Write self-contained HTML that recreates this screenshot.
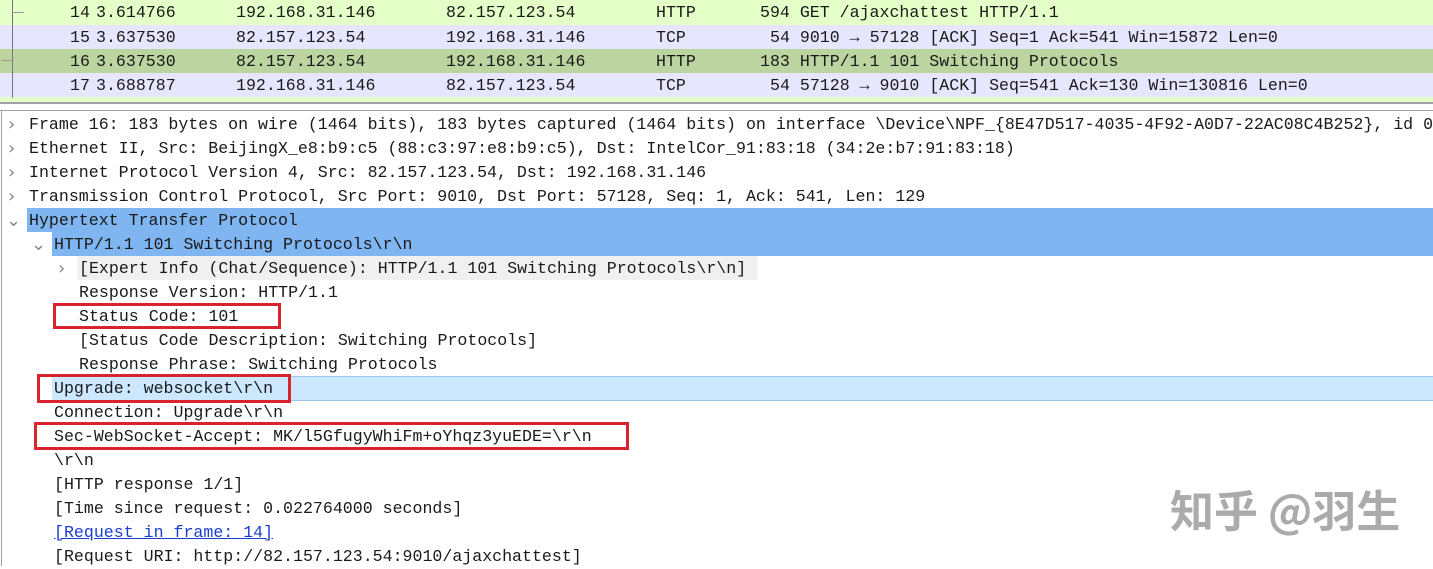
<!DOCTYPE html>
<html><head><meta charset="utf-8"><style>
body{margin:0;width:1433px;height:566px;overflow:hidden;background:#fff;position:relative;font-family:"Liberation Mono",monospace;font-size:16.6px;color:#1a1a1a}
.r{position:absolute;left:0;width:1433px;height:24px;line-height:25px;white-space:pre}
.c{position:absolute;top:0}
.t{position:absolute;top:0;white-space:pre}
.ar{position:absolute;top:0;color:#888;font-family:"DejaVu Sans",sans-serif;font-size:18px}
.box{position:absolute;border:3px solid #d9232e;box-sizing:border-box}
</style></head><body>
<div style="position:absolute;left:0;top:0;width:1433px;height:102px;background:#e4ffc7"></div>
<div class="r" style="top:0;background:#e4ffc7"><span class="c" style="left:70px">14</span><span class="c" style="left:96px">3.614766</span><span class="c" style="left:236px">192.168.31.146</span><span class="c" style="left:446px">82.157.123.54</span><span class="c" style="left:656px">HTTP</span><span class="c" style="left:760px">594 GET /ajaxchattest HTTP/1.1</span></div>
<div class="r" style="top:25px;background:#e7e6ff"><span class="c" style="left:70px">15</span><span class="c" style="left:96px">3.637530</span><span class="c" style="left:236px">82.157.123.54</span><span class="c" style="left:446px">192.168.31.146</span><span class="c" style="left:656px">TCP</span><span class="c" style="left:770px">54 9010 → 57128 [ACK] Seq=1 Ack=541 Win=15872 Len=0</span></div>
<div class="r" style="top:49px;background:#bcd5a0"><span class="c" style="left:70px">16</span><span class="c" style="left:96px">3.637530</span><span class="c" style="left:236px">82.157.123.54</span><span class="c" style="left:446px">192.168.31.146</span><span class="c" style="left:656px">HTTP</span><span class="c" style="left:760px">183 HTTP/1.1 101 Switching Protocols</span></div>
<div class="r" style="top:73px;background:#e7e6ff"><span class="c" style="left:70px">17</span><span class="c" style="left:96px">3.688787</span><span class="c" style="left:236px">192.168.31.146</span><span class="c" style="left:446px">82.157.123.54</span><span class="c" style="left:656px">TCP</span><span class="c" style="left:770px">54 57128 → 9010 [ACK] Seq=541 Ack=130 Win=130816 Len=0</span></div>
<div style="position:absolute;left:12px;top:0;width:1px;height:98px;background:#777"></div>
<div style="position:absolute;left:12px;top:12px;width:12px;height:1px;background:#999"></div>
<div style="position:absolute;left:2px;top:60px;width:12px;height:1px;background:#999"></div>
<div style="position:absolute;left:0;top:102px;width:1433px;height:2px;background:#a0a0a0"></div>
<div style="position:absolute;left:0;top:110px;width:1433px;height:1px;background:#a0a0a0"></div>
<div style="position:absolute;left:1px;top:110px;width:1px;height:456px;background:#a0a0a0"></div>

<div class="r" style="top:208px;left:27px;width:1406px;background:#7fb5f0"></div>
<div class="r" style="top:232px;left:52px;width:1381px;background:#7fb5f0"></div>
<div class="r" style="top:256px;left:77px;width:680px;background:#f0f0f0"></div>
<div class="r" style="top:376px;left:52px;width:1381px;background:#cce8ff;border-top:1px solid #99c9ef;border-bottom:1px solid #99c9ef;height:23px"></div>

<div class="r" style="top:112px"><span class="ar" style="left:8px">›</span><span class="t" style="left:29px">Frame 16: 183 bytes on wire (1464 bits), 183 bytes captured (1464 bits) on interface \Device\NPF_{8E47D517-4035-4F92-A0D7-22AC08C4B252}, id 0</span></div>
<div class="r" style="top:136px"><span class="ar" style="left:8px">›</span><span class="t" style="left:29px">Ethernet II, Src: BeijingX_e8:b9:c5 (88:c3:97:e8:b9:c5), Dst: IntelCor_91:83:18 (34:2e:b7:91:83:18)</span></div>
<div class="r" style="top:160px"><span class="ar" style="left:8px">›</span><span class="t" style="left:29px">Internet Protocol Version 4, Src: 82.157.123.54, Dst: 192.168.31.146</span></div>
<div class="r" style="top:184px"><span class="ar" style="left:8px">›</span><span class="t" style="left:29px">Transmission Control Protocol, Src Port: 9010, Dst Port: 57128, Seq: 1, Ack: 541, Len: 129</span></div>
<div class="r" style="top:208px"><span class="ar" style="left:6px">⌄</span><span class="t" style="left:29px">Hypertext Transfer Protocol</span></div>
<div class="r" style="top:232px"><span class="ar" style="left:31px">⌄</span><span class="t" style="left:54px">HTTP/1.1 101 Switching Protocols\r\n</span></div>
<div class="r" style="top:256px"><span class="ar" style="left:58px">›</span><span class="t" style="left:79px">[Expert Info (Chat/Sequence): HTTP/1.1 101 Switching Protocols\r\n]</span></div>
<div class="r" style="top:280px"><span class="t" style="left:79px">Response Version: HTTP/1.1</span></div>
<div class="r" style="top:304px"><span class="t" style="left:79px">Status Code: 101</span></div>
<div class="r" style="top:328px"><span class="t" style="left:79px">[Status Code Description: Switching Protocols]</span></div>
<div class="r" style="top:352px"><span class="t" style="left:79px">Response Phrase: Switching Protocols</span></div>
<div class="r" style="top:376px"><span class="t" style="left:54px">Upgrade: websocket\r\n</span></div>
<div class="r" style="top:400px"><span class="t" style="left:54px">Connection: Upgrade\r\n</span></div>
<div class="r" style="top:424px"><span class="t" style="left:54px">Sec-WebSocket-Accept: MK/l5GfugyWhiFm+oYhqz3yuEDE=\r\n</span></div>
<div class="r" style="top:448px"><span class="t" style="left:54px">\r\n</span></div>
<div class="r" style="top:472px"><span class="t" style="left:54px">[HTTP response 1/1]</span></div>
<div class="r" style="top:496px"><span class="t" style="left:54px">[Time since request: 0.022764000 seconds]</span></div>
<div class="r" style="top:520px"><span class="t" style="left:54px;color:#1a3fd0;text-decoration:underline">[Request in frame: 14]</span></div>
<div class="r" style="top:544px"><span class="t" style="left:54px">[Request URI: http://82.157.123.54:9010/ajaxchattest]</span></div>

<div class="box" style="left:53px;top:303px;width:228px;height:26px"></div>
<div class="box" style="left:37px;top:374px;width:254px;height:29px"></div>
<div class="box" style="left:34px;top:422px;width:595px;height:28px"></div>

<div style="position:absolute;left:1170px;top:481px;font-family:'Noto Sans CJK SC',sans-serif;font-size:44px;font-weight:bold;line-height:54px;color:#ababab;white-space:pre">知乎 @羽生</div>
</body></html>
